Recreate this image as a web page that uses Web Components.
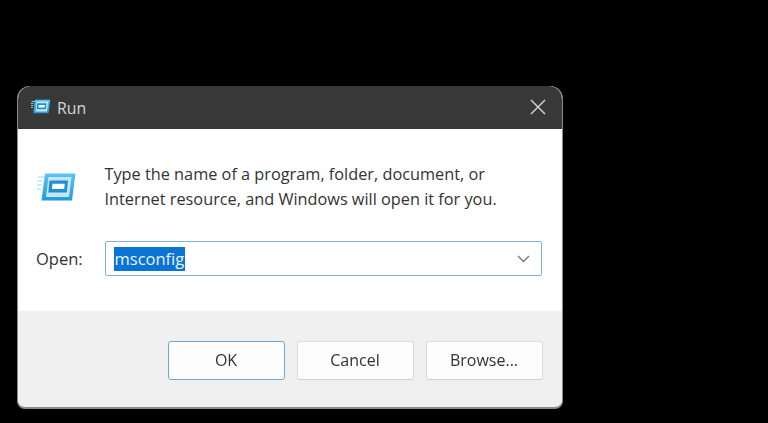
<!DOCTYPE html>
<html><head><meta charset="utf-8">
<style>
html,body{margin:0;padding:0;background:#000;width:768px;height:423px;overflow:hidden}
body{padding:86px 0 0 17px;box-sizing:border-box;font-family:"Open Sans","Noto Sans",sans-serif;color:#333}
</style></head><body>
<run-dialog></run-dialog>
<template id="ic"><svg viewBox="0 0 40 30" width="100%" height="100%" style="display:block">
<defs><linearGradient id="g" x1="0" y1="0" x2="0" y2="1"><stop offset="0" stop-color="#5cc4f0"/><stop offset="1" stop-color="#1e9be0"/></linearGradient></defs>
<path d="M1 5h7M0 9h5M0 13h5M0 17h4" stroke="#bfe6f8" stroke-width="1.6" fill="none"/>
<path d="M8 1.500H38.500L35 28.500H4.500Z" fill="url(#g)"/>
<path d="M11.500 5H34.500L32 25H9Z" fill="#c4e6f7"/>
<path d="M12.500 8.500H31L29.800 20.500H11.300Z" fill="#1f8fd6"/>
<path d="M15.500 11.800H27.800L27.200 17H14.900Z" fill="#fff"/>
</svg></template>
<script>
const ico=()=>document.getElementById('ic').innerHTML;
class RunIcon extends HTMLElement{constructor(){super();this.attachShadow({mode:'open'}).innerHTML=`<style>:host{display:block;width:var(--w);height:var(--h)}</style>${ico()}`}}
customElements.define('run-icon',RunIcon);
class TitleBar extends HTMLElement{constructor(){super();this.attachShadow({mode:'open'}).innerHTML=`<style>
:host{display:flex;align-items:center;height:43px;background:#383838;color:#d6d6d6;border-radius:13px 13px 0 0;padding:0 16px 0 13px;font-size:15.800px;flex:none}
run-icon{--w:20px;--h:15px;margin-right:6px;margin-top:-2px}
span{flex:1;margin-top:1px}
svg{display:block;margin-top:-2px}
</style><run-icon></run-icon><span><slot></slot></span>
<svg width="16" height="16" viewBox="0 0 16 16"><path d="M1 1L15 15M15 1L1 15" stroke="#cfcfcf" stroke-width="1.500" fill="none"/></svg>`}}
customElements.define('title-bar',TitleBar);
class ComboBox extends HTMLElement{constructor(){super();this.attachShadow({mode:'open'}).innerHTML=`<style>
:host{display:flex;align-items:center;box-sizing:border-box;flex:1;height:35px;background:#fff;border:1.500px solid #7fb4d2;border-radius:2px;padding:0 11px 0 8px;color:#fff;font-size:16.500px}
mark{background:#0a74d4;color:#e8f4ff;padding:0 1px;line-height:24px;display:block;height:24px}
i{flex:1}
</style><mark><slot></slot></mark><i></i>
<svg width="13" height="8" viewBox="0 0 13 8"><path d="M1 1L6.500 6.500L12 1" stroke="#777" stroke-width="1.300" fill="none"/></svg>`}}
customElements.define('combo-box',ComboBox);
class DlgButton extends HTMLElement{constructor(){super();this.attachShadow({mode:'open'}).innerHTML=`<style>
:host{display:flex;align-items:center;justify-content:center;box-sizing:border-box;width:117px;height:39px;padding:0 1px 2px 0;background:#fdfdfd;border:1px solid #dcdcdc;border-bottom-color:#cfcfcf;border-radius:3px;font-size:16px;color:#333}
:host([primary]){border:1.500px solid #6fa9cc}
</style><slot></slot>`}}
customElements.define('dlg-button',DlgButton);
class RunDialog extends HTMLElement{constructor(){super();this.attachShadow({mode:'open'}).innerHTML=`<style>
:host{display:flex;flex-direction:column;box-sizing:border-box;width:546px;height:323px;background:#f0f0f0;border-radius:13px 13px 8px 8px;border:solid #8a8a8a;border-width:0 1.500px 2.500px 1.500px;overflow:hidden;filter:blur(.45px)}
.main{background:#fff;height:182px;flex:none;display:flex;flex-direction:column;box-sizing:border-box;padding:33px 20px 0 18px}
.top{display:flex;height:79px}
.top run-icon{--w:40px;--h:30px;margin:10px 0 0 1px;flex:none}
.msg{margin-left:27.500px;font-size:16.300px;line-height:25px;white-space:nowrap;color:#333}
.open{display:flex;align-items:center;font-size:16.500px;height:35px}
.open label{width:68.500px;flex:none}
.foot{flex:1;display:flex;justify-content:flex-end;gap:12px;padding:30px 19px 0 0}
</style>
<title-bar>Run</title-bar>
<div class="main">
<div class="top"><run-icon></run-icon><div class="msg">Type the name of a program, folder, document, or<br>Internet resource, and Windows will open it for you.</div></div>
<div class="open"><label>Open:</label><combo-box>msconfig</combo-box></div>
</div>
<div class="foot"><dlg-button primary>OK</dlg-button><dlg-button>Cancel</dlg-button><dlg-button>Browse...</dlg-button></div>`}}
customElements.define('run-dialog',RunDialog);
</script>
</body></html>
